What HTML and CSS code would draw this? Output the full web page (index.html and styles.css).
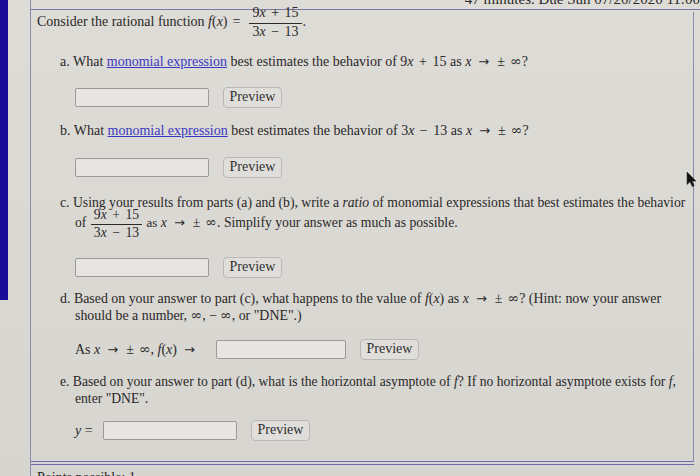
FILE: index.html
```html
<!DOCTYPE html>
<html>
<head>
<meta charset="utf-8">
<link rel="stylesheet" href="styles.css">
</head>
<body>
<div class="page">
  <div class="rail"></div>
  <div class="main">
    <div class="header"><span>47 minutes. Due Sun 07/20/2020 11:00</span></div>
    <div class="box">
      <p class="intro">Consider the rational function <i>f</i>(<i>x</i>)<span class="eq">=</span><span class="frac"><span class="num">9<i>x</i><span class="bin">+</span>15</span><span class="den">3<i>x</i><span class="bin">−</span>13</span></span>.</p>

      <div class="part pa">
        <p>a. What <a class="link">monomial expression</a> best estimates the behavior of 9<i>x</i><span class="bin">+</span>15 as <i>x</i><span class="ar">→</span><span class="pm">±</span><span class="inf">∞</span>?</p>
        <div class="answer"><input class="field" type="text"><button class="btn">Preview</button></div>
      </div>

      <div class="part pb">
        <p>b. What <a class="link">monomial expression</a> best estimates the behavior of 3<i>x</i><span class="bin">−</span>13 as <i>x</i><span class="ar">→</span><span class="pm">±</span><span class="inf">∞</span>?</p>
        <div class="answer"><input class="field" type="text"><button class="btn">Preview</button></div>
      </div>

      <div class="part pc">
        <p>c. Using your results from parts (a) and (b), write a <i>ratio</i> of monomial expressions that best estimates the behavior</p>
        <p class="cont">of <span class="frac"><span class="num">9<i>x</i><span class="bin">+</span>15</span><span class="den">3<i>x</i><span class="bin">−</span>13</span></span> <span class="small">as</span> <i>x</i><span class="ar">→</span><span class="pm">±</span><span class="inf">∞</span>. Simplify your answer as much as possible.</p>
        <div class="answer"><input class="field" type="text"><button class="btn">Preview</button></div>
      </div>

      <div class="part pd">
        <p>d. Based on your answer to part (c), what happens to the value of <i>f</i>(<i>x</i>) as <i>x</i><span class="ar">→</span><span class="pm">±</span><span class="inf">∞</span>? (Hint: now your answer<br>should be a number, <span class="inf">∞</span>, <span class="neg">−</span><span class="inf">∞</span>, or "DNE".)</p>
        <div class="answer"><span class="label">As <i>x</i><span class="ar">→</span><span class="pm">±</span><span class="inf">∞</span>, <i>f</i>(<i>x</i>)<span class="ar">→</span></span><input class="field narrow" type="text"><button class="btn">Preview</button></div>
      </div>

      <div class="part pe">
        <p>e. Based on your answer to part (d), what is the horizontal asymptote of <i>f</i>? If no horizontal asymptote exists for <i>f</i>,<br>enter "DNE".</p>
        <div class="answer"><span class="label"><i>y</i> =</span><input class="field" type="text"><button class="btn">Preview</button></div>
      </div>
    </div>
    <div class="points">Points possible: 1</div>
  </div>
</div>
<svg class="cursor" width="12" height="17" viewBox="0 0 12 17"><path d="M1 1 L1 13.5 L4 10.8 L6.3 15.6 L8.2 14.7 L6 10 L10 10 Z" fill="#111" stroke="#333" stroke-width="0.6"/></svg>
</body>
</html>
```
FILE: styles.css
```css
html, body {
  margin: 0;
  padding: 0;
  width: 700px;
  height: 476px;
  overflow: hidden;
}
body {
  background: linear-gradient(to bottom, #dedcd6, #d6d5d0);
  font-family: "Liberation Serif", "Times New Roman", serif;
  font-size: 14px;
  color: #2a2828;
  position: relative;
}
.page {
  display: flex;
  align-items: flex-start;
}
.rail {
  width: 8px;
  height: 300px;
  background: #1b0d9a;
  flex: none;
  margin-right: 22px;
}
.main {
  width: 663px;
  border-left: 1px solid #8d8aae;
  flex: none;
}
.header {
  display: flow-root;
  height: 9px;
  border-bottom: 1px solid #7c78a4;
  margin-right: -6px;
}
.header span {
  display: block;
  margin-top: -8px;
  line-height: 15px;
  font-size: 15px;
  text-align: right;
}
.box {
  border-right: 1px solid #8d8aae;
  border-bottom: 1px solid #6f6aac;
  padding: 0 0 21px 6px;
}
p {
  margin: 0;
  line-height: 17px;
  white-space: nowrap;
}
.intro {
  margin-top: 2px;
  line-height: 20px;
}
.eq {
  margin: 0 8px 0 5px;
}
.frac {
  display: inline-block;
  vertical-align: -10px;
  text-align: center;
  margin: -8px 1px;
}
.num {
  display: block;
  line-height: 14px;
  padding: 0 3px 3px;
  border-bottom: 1px solid #2a2828;
}
.den {
  display: block;
  line-height: 14px;
  padding: 1px 3px 0;
}
.pc .num {
  padding-bottom: 2px;
}
.bin {
  margin: 0 5.5px;
}
.ar {
  font-family: "DejaVu Sans", sans-serif;
  font-size: 13px;
  margin: 0 8px 0 7px;
}
.pm {
  margin-right: 5px;
}
.inf {
  font-family: "DejaVu Serif", serif;
  font-size: 14px;
}
.neg {
  margin-right: 3px;
}
.small {
  font-size: 13px;
}
.link {
  color: #3a38c2;
  text-decoration: underline;
}
.part {
  margin-left: 23px;
}
.part p {
  padding-left: 15px;
  text-indent: -15px;
}
.part p.cont {
  text-indent: 0;
  margin-top: 3px;
}
.pc p {
  font-size: 13.7px;
}
.pd p {
  font-size: 13.9px;
}
.pe p {
  font-size: 13.65px;
}
.pa { margin-top: 21px; }
.pb { margin-top: 15px; }
.pc { margin-top: 17px; }
.pd { margin-top: 13px; }
.pe { margin-top: 14px; }
.answer {
  display: flex;
  align-items: center;
  margin-left: 15px;
  margin-top: 17px;
  height: 20px;
}
.pb .answer { margin-top: 18px; }
.pc .answer { margin-top: 25px; }
.pd .answer { margin-top: 15px; }
.pe .answer { margin-top: 13px; }
.field {
  box-sizing: border-box;
  width: 134px;
  height: 19px;
  margin: 0;
  padding: 0;
  border: 1px solid #9b9a96;
  border-radius: 2px;
  background: #e6e5e1;
}
.field.narrow {
  width: 130px;
}
.btn {
  box-sizing: border-box;
  width: 59px;
  height: 21px;
  margin: 0 0 0 14px;
  padding: 0;
  font-family: "Liberation Serif", "Times New Roman", serif;
  font-size: 14px;
  color: #2f2e2e;
  background: #dfdedb;
  border: 1px solid #b9b8b4;
  border-radius: 4px;
}
.label {
  flex: none;
  line-height: 17px;
  white-space: nowrap;
}
.pd .label {
  width: 141px;
}
.pe .label {
  width: 28px;
}
.points {
  margin-top: 2px;
  border-top: 1px solid #6f6aac;
  padding: 4px 0 0 6px;
  line-height: 17px;
}
.cursor {
  position: absolute;
  left: 686px;
  top: 171px;
}
```
